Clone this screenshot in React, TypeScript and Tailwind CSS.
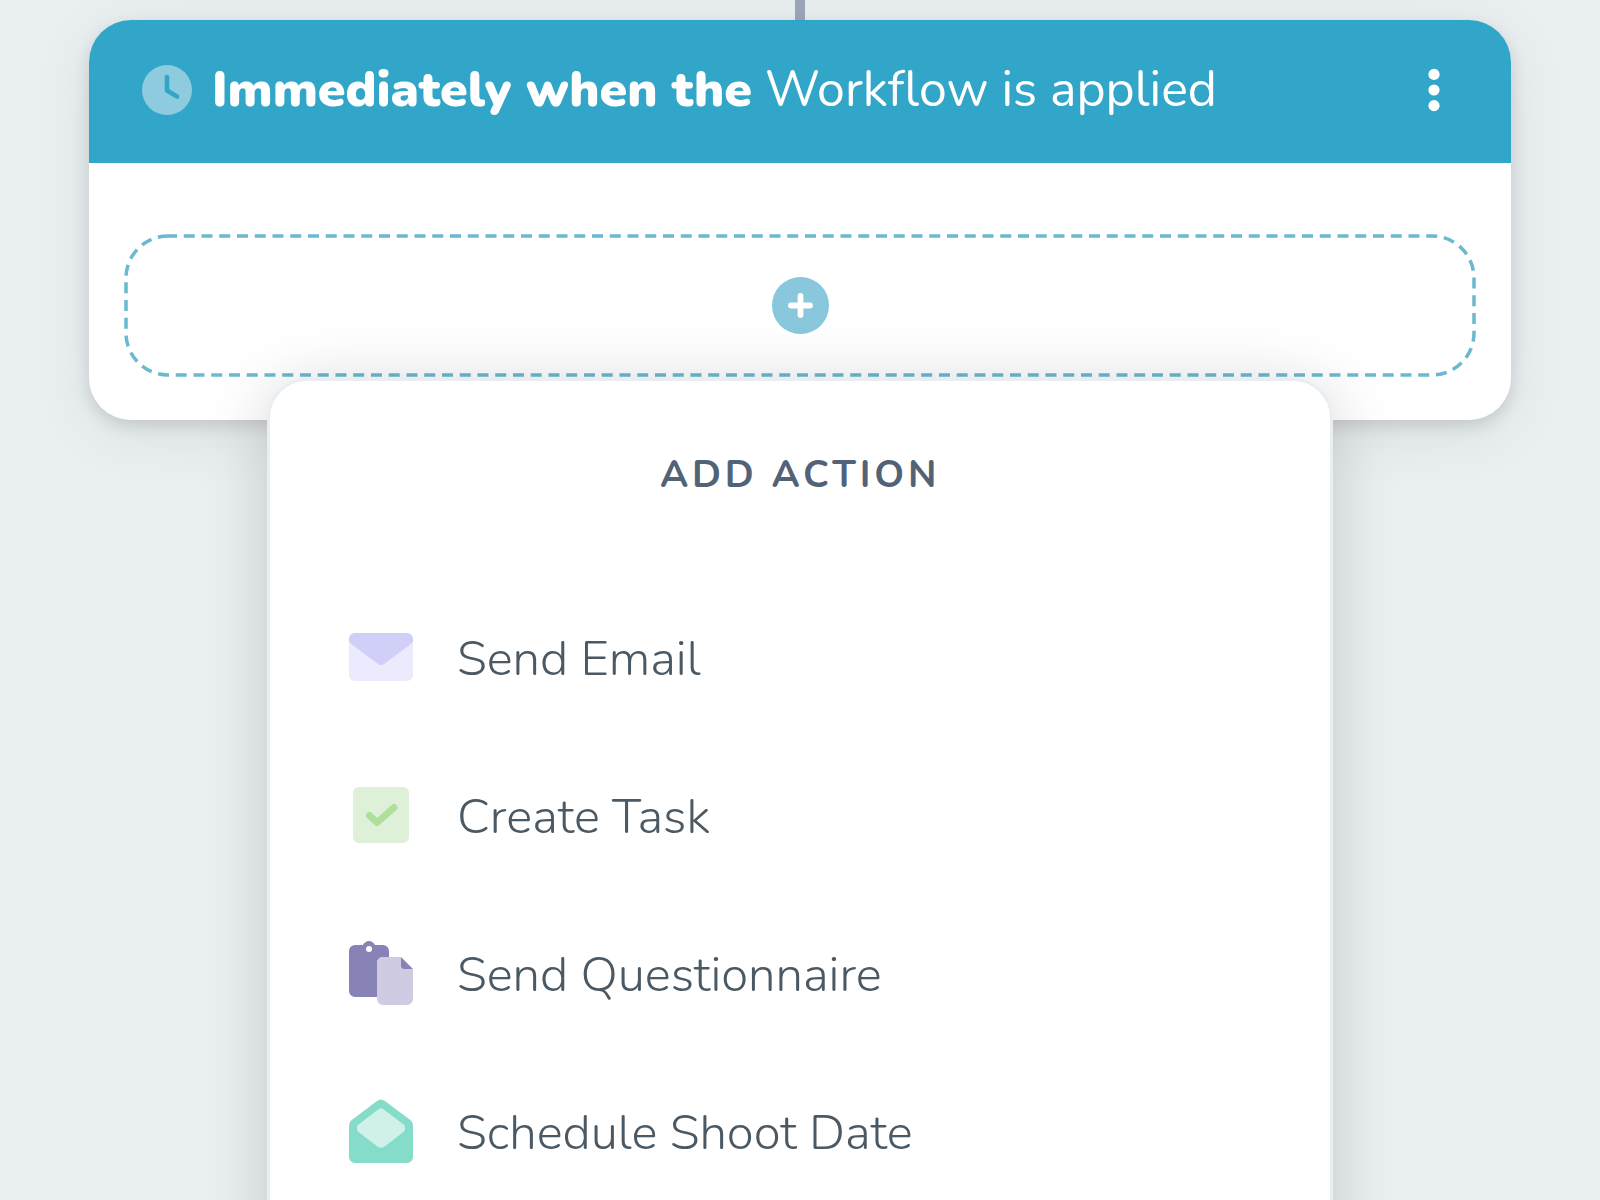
import React from 'react';

const ClockIcon: React.FC = () => (
  <svg viewBox="0 0 50 50" className="size-[50px] shrink-0" fill="none" aria-hidden="true">
    <circle cx="25" cy="25" r="25" fill="#8fcbdf" />
    <path d="M25 12v13.5l10 6" stroke="#32a6c9" strokeWidth="4.6" strokeLinecap="round" strokeLinejoin="round" />
  </svg>
);

const KebabIcon: React.FC = () => (
  <svg viewBox="0 0 12 44" className="h-11 w-3" fill="#fff" aria-hidden="true">
    <circle cx="6" cy="6.4" r="5.6" />
    <circle cx="6" cy="22" r="5.6" />
    <circle cx="6" cy="37.6" r="5.6" />
  </svg>
);

const EmailIcon: React.FC = () => (
  <svg viewBox="0 0 64 64" className="size-16 shrink-0" aria-hidden="true">
    <rect y="8" width="64" height="48" rx="6" fill="#ebebfd" />
    <path d="M6 8h52a6 6 0 0 1 6 6v2.500c-1 1.500-2 2.200-3.500 3.400L36 38.300c-1.300 1-2.600 1.900-4 1.900s-2.700-.9-4-1.900L3.500 19.900C2 18.700 1 18 0 16.500V14a6 6 0 0 1 6-6z" fill="#d0cff7" />
  </svg>
);

const TaskIcon: React.FC = () => (
  <svg viewBox="0 0 64 64" className="size-16 shrink-0" fill="none" aria-hidden="true">
    <rect x="4" y="4" width="56" height="56" rx="6" fill="#dff0d8" />
    <path d="M20.500 32.500l7.500 7L45 24.500" stroke="#aee09c" strokeWidth="7" strokeLinecap="round" strokeLinejoin="round" />
  </svg>
);

const QuestionnaireIcon: React.FC = () => (
  <svg viewBox="0 0 64 64" className="size-16 shrink-0" aria-hidden="true">
    <path
      fillRule="evenodd"
      d="M6 4h8c1-2.300 3.300-4 6-4s5 1.700 6 4h8a6 6 0 0 1 6 6v6h-6a6 6 0 0 0-6 6v34H6a6 6 0 0 1-6-6V10a6 6 0 0 1 6-6zm14 1a3 3 0 1 0 0 6 3 3 0 0 0 0-6z"
      fill="#8783b7"
    />
    <path d="M34 16h18v9a3 3 0 0 0 3 3h9v30a6 6 0 0 1-6 6H34a6 6 0 0 1-6-6V22a6 6 0 0 1 6-6z" fill="#cfcbe3" />
    <path d="M52 16l12 12H55a3 3 0 0 1-3-3z" fill="#8783b7" />
  </svg>
);

const ShootDateIcon: React.FC = () => (
  <svg viewBox="0 0 64 64" className="size-16 shrink-0" aria-hidden="true">
    <path d="M28 1.900c2.600-2 5.400-2 8 0l25.600 19.300A6 6 0 0 1 64 26v32a6 6 0 0 1-6 6H6a6 6 0 0 1-6-6V26a6 6 0 0 1 2.400-4.800z" fill="#85dcc9" />
    <path d="M29.500 10.200c1.700-1.400 3.300-1.400 5 0L54.500 25.500q1.500 1.200 1.500 2.500v2.500q0 1.300-1.500 2.500L36 47.300c-2.700 2-5.300 2-8 0L9.500 33Q8 31.800 8 30.500V28q0-1.300 1.500-2.500z" fill="#cff1e9" />
  </svg>
);

const actions = [
  { label: 'Send Email', Icon: EmailIcon },
  { label: 'Create Task', Icon: TaskIcon },
  { label: 'Send Questionnaire', Icon: QuestionnaireIcon },
  { label: 'Schedule Shoot Date', Icon: ShootDateIcon },
];

const ActionMenu: React.FC = () => (
  <div className="absolute inset-x-[143px] top-full mt-px rounded-[40px] border-[3px] border-[#e8eef1] bg-white pb-16 shadow-[0_8px_64px_rgba(0,0,0,0.17)]">
    <h2 className="pt-[70px] text-center text-[38px] leading-[48px] font-bold tracking-widest text-[#526277]">ADD ACTION</h2>
    <ul className="mt-[79px]">
      {actions.map(({ label, Icon }) => (
        <li key={label}>
          <button type="button" className="flex h-[158px] w-full items-center gap-11 px-[79px] text-left">
            <Icon />
            <span className="pt-1 text-[49px] leading-[60px] font-light text-[#4a5963]">{label}</span>
          </button>
        </li>
      ))}
    </ul>
  </div>
);

const App: React.FC = () => {
  return (
    <main className="h-screen overflow-hidden bg-[#eaeff2] px-[89px] font-['Nunito','Lato',sans-serif]">
      {/* Connector from the previous step */}
      <div className="mx-auto h-5 w-2.5 bg-[#9ca7bd]" />

      <section className="rounded-[42px] bg-white shadow-[0_6px_16px_rgba(0,0,0,0.12),0_12px_64px_rgba(0,0,0,0.08)]">
        <header className="flex h-[143px] items-center gap-5 rounded-t-[42px] bg-[#32a6c9] pr-[71px] pb-1 pl-[53px] text-white">
          <ClockIcon />
          <h1 className="flex-1 text-[50px] leading-[60px] font-normal">
            <strong className="font-black">Immediately when the</strong> Workflow is applied
          </h1>
          <button type="button" aria-label="Step options">
            <KebabIcon />
          </button>
        </header>

        <div className="px-[35px] pt-[71px] pb-[43px]">
          <div className="relative">
            <button type="button" aria-label="Add action" className="relative flex h-[143px] w-full items-center justify-center">
              <svg className="absolute inset-0 size-full overflow-visible p-0.5" fill="none" aria-hidden="true">
                <rect width="100%" height="100%" rx="42" stroke="#6bb9d1" strokeWidth="3.500" strokeDasharray="11 6.750" strokeDashoffset="2" />
              </svg>
              <svg viewBox="0 0 57 57" className="size-[57px]" aria-hidden="true">
                <circle cx="28.500" cy="28.500" r="28.500" fill="#88c7dc" />
                <path d="M28.500 19v19M19 28.500h19" stroke="#fff" strokeWidth="5.800" strokeLinecap="round" />
              </svg>
            </button>
            <ActionMenu />
          </div>
        </div>
      </section>
    </main>
  );
};

export default App;
